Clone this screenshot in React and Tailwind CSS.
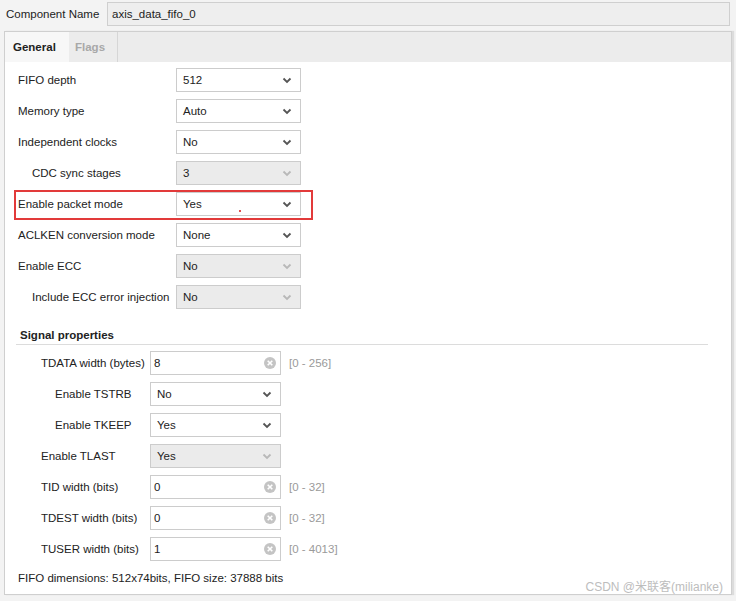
import React from "react";

const font = { fontFamily: '"Liberation Sans", Arial, sans-serif' };

const Chevron = ({ disabled }) => (
  <svg width="10" height="7" viewBox="0 0 10 7" className="shrink-0">
    <path
      d="M1.5 1.5 L5 5 L8.5 1.5"
      fill="none"
      stroke={disabled ? "#b8b8b8" : "#555555"}
      strokeWidth="1.8"
    />
  </svg>
);

const ClearIcon = () => (
  <svg width="12" height="12" viewBox="0 0 12 12" className="shrink-0">
    <circle cx="6" cy="6" r="6" fill="#c4c4c4" />
    <path d="M3.7 3.7 L8.3 8.3 M8.3 3.7 L3.7 8.3" stroke="#fff" strokeWidth="1.6" />
  </svg>
);

const Select = ({ value, disabled, w }) => (
  <div
    className={`h-[24px] ${w} shrink-0 border border-[#cccccc] flex items-center justify-between pl-[6px] pr-[8px] ${
      disabled ? "bg-[#ebebeb]" : "bg-white"
    }`}
  >
    <span className="text-[#222]">{value}</span>
    <Chevron disabled={disabled} />
  </div>
);

const TextInput = ({ value, range }) => (
  <div className="flex items-center gap-[8px]">
    <div className="h-[24px] w-[131px] shrink-0 border border-[#cccccc] bg-white flex items-center justify-between pl-[3px] pr-[4px]">
      <span className="text-[#222]">{value}</span>
      <ClearIcon />
    </div>
    <span className="text-[#9a9a9a]">{range}</span>
  </div>
);

const topRows = [
  { label: "FIFO depth", value: "512" },
  { label: "Memory type", value: "Auto" },
  { label: "Independent clocks", value: "No" },
  { label: "CDC sync stages", value: "3", indent: true, disabled: true },
  { label: "Enable packet mode", value: "Yes", mark: true },
  { label: "ACLKEN conversion mode", value: "None" },
  { label: "Enable ECC", value: "No", disabled: true },
  { label: "Include ECC error injection", value: "No", indent: true, disabled: true },
];

const signalRows = [
  { label: "TDATA width (bytes)", value: "8", range: "[0 - 256]", input: true },
  { label: "Enable TSTRB", value: "No", indent: true },
  { label: "Enable TKEEP", value: "Yes", indent: true },
  { label: "Enable TLAST", value: "Yes", disabled: true },
  { label: "TID width (bits)", value: "0", range: "[0 - 32]", input: true },
  { label: "TDEST width (bits)", value: "0", range: "[0 - 32]", input: true },
  { label: "TUSER width (bits)", value: "1", range: "[0 - 4013]", input: true },
];

export default function App() {
  return (
    <div
      className="w-[736px] h-[601px] bg-[#f3f3f3] text-[#222] text-[11.5px] leading-[14px] overflow-hidden"
      style={font}
    >
      {/* component name */}
      <div className="flex items-center h-[24px] mt-[2px] pl-[6px]">
        <span className="w-[101px]">Component Name</span>
        <div className="h-[24px] w-[623px] bg-[#eeeeee] border border-[#cfcfcf] flex items-center pl-[4px]">
          axis_data_fifo_0
        </div>
      </div>

      {/* tab panel */}
      <div className="relative ml-[4px] mt-[5px] w-[728px] h-[564px] border border-[#cfcfcf] bg-white shadow-[2px_0_1px_#dcdcdc] flex flex-col">
        <div className="h-[30px] shrink-0 bg-[#ececec] flex items-stretch">
          <div className="w-[64px] bg-[#f7f7f7] flex items-center pl-[8px] font-bold text-[#222]">
            General
          </div>
          <div className="w-[49px] border-r border-[#d6d6d6] flex items-center pl-[6px] font-bold text-[#a8a8a8]">
            Flags
          </div>
        </div>

        <div className="flex flex-col gap-[7px] pt-[6px] shrink-0">
          {topRows.map((r) => (
            <div key={r.label} className="relative flex items-center h-[24px]">
              <span className={`w-[171px] shrink-0 ${r.indent ? "pl-[27px]" : "pl-[13px]"}`}>{r.label}</span>
              <Select value={r.value} disabled={r.disabled} w="w-[125px]" />
              {r.mark && (
                <div className="absolute left-[9px] top-[-2px] w-[299px] h-[30px] border-2 border-[#e23a3a] pointer-events-none" />
              )}
              {r.mark && <div className="absolute left-[234px] top-[18px] w-[2px] h-[2px] bg-[#e05050]" />}
            </div>
          ))}
        </div>

        {/* signal properties */}
        <div className="shrink-0 mt-[19px] ml-[11px] mr-[23px] border-b border-[#dcdcdc] pb-[2px] pl-[4px] font-bold">
          Signal properties
        </div>
        <div className="flex flex-col gap-[7px] pt-[6px] shrink-0">
          {signalRows.map((r) => (
            <div key={r.label} className="flex items-center h-[24px]">
              <span className={`w-[145px] shrink-0 ${r.indent ? "pl-[50px]" : "pl-[36px]"}`}>{r.label}</span>
              {r.input ? (
                <TextInput value={r.value} range={r.range} />
              ) : (
                <Select value={r.value} disabled={r.disabled} w="w-[131px]" />
              )}
            </div>
          ))}
        </div>

        <div className="shrink-0 mt-[10px] pl-[13px]">FIFO dimensions: 512x74bits, FIFO size: 37888 bits</div>

        {/* watermark */}
        <span
          className="absolute right-[8px] bottom-[0px] text-[12px] text-[#bdbdbd]"
          style={{ fontFamily: '"Liberation Sans", "Noto Sans CJK SC", sans-serif' }}
        >
          CSDN @米联客(milianke)
        </span>
      </div>
    </div>
  );
}
